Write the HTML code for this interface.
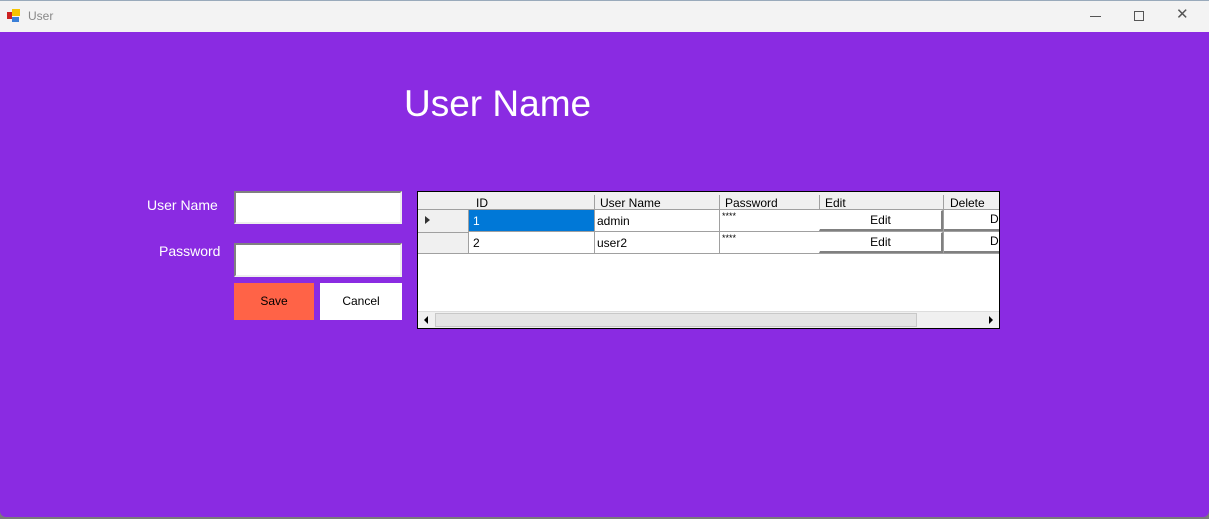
<!DOCTYPE html>
<html><head><style>
*{margin:0;padding:0;box-sizing:border-box}
body{width:1209px;height:519px;overflow:hidden;background:#7a7a7a;font-family:"Liberation Sans",sans-serif;position:relative}
.a{position:absolute}
.t{font-size:12px;color:#000}
</style></head><body>
<div class="a" style="left:0;top:0;width:1209px;height:32px;background:#f3f3f3;border-top:1px solid #9ab"></div>
<div class="a" style="left:7px;top:9px;width:14px;height:14px">
<div class="a" style="left:0;top:3px;width:5px;height:7px;background:#c22"></div>
<div class="a" style="left:5px;top:0;width:8px;height:7px;background:#f5c400"></div>
<div class="a" style="left:5px;top:8px;width:7px;height:5px;background:#3a7fd8"></div>
</div>
<div class="a" style="left:28px;top:9px;font-size:12px;color:#888">User</div>
<div class="a" style="left:1090px;top:16px;width:11px;height:1px;background:#555"></div>
<div class="a" style="left:1134px;top:11px;width:10px;height:10px;border:1px solid #555"></div>
<div class="a" style="left:1176px;top:5px;font-size:15px;color:#555">✕</div>
<div class="a" style="left:0;top:32px;width:1209px;height:485px;background:#8a2be2;border-radius:0 0 6px 6px"></div>
<div class="a" style="left:404px;top:83px;font-size:37px;color:#fff">User Name</div>
<div class="a" style="left:147px;top:197px;font-size:14px;color:#fff">User Name</div>
<div class="a" style="left:159px;top:243px;font-size:14px;color:#fff">Password</div>
<div class="a" style="left:234px;top:191px;width:168px;height:33px;background:#fff;border:2px solid #808080;border-right-color:#eee;border-bottom-color:#eee"></div>
<div class="a" style="left:234px;top:243px;width:168px;height:34px;background:#fff;border:2px solid #808080;border-right-color:#eee;border-bottom-color:#eee"></div>
<div class="a t" style="left:234px;top:283px;width:80px;height:37px;background:#ff6347;text-align:center;line-height:37px">Save</div>
<div class="a t" style="left:320px;top:283px;width:82px;height:37px;background:#fff;text-align:center;line-height:37px">Cancel</div>
<div class="a" style="left:417px;top:191px;width:583px;height:138px;background:#fff;border:1px solid #000;overflow:hidden">
 <div class="a" style="left:0;top:0;width:582px;height:18px;background:#f0f0f0;border-bottom:1px solid #a0a0a0"></div>
 <div class="a" style="left:0;top:18px;width:51px;height:44px;background:#f0f0f0;border-right:1px solid #a0a0a0"></div>
 <div class="a" style="left:0;top:40px;width:51px;height:1px;background:#a0a0a0"></div>
 <div class="a" style="left:7px;top:24px;width:0;height:0;border-left:5px solid #333;border-top:4px solid transparent;border-bottom:4px solid transparent"></div>
 <div class="a" style="left:51px;top:18px;width:125px;height:21px;background:#0078d7"></div>
 <div class="a" style="left:51px;top:39px;width:531px;height:1px;background:#a0a0a0"></div>
 <div class="a" style="left:0;top:61px;width:582px;height:1px;background:#a0a0a0"></div>
 <div class="a" style="left:176px;top:3px;width:1px;height:59px;background:#a0a0a0"></div>
 <div class="a" style="left:301px;top:3px;width:1px;height:59px;background:#a0a0a0"></div>
 <div class="a" style="left:401px;top:3px;width:1px;height:59px;background:#a0a0a0"></div>
 <div class="a" style="left:525px;top:3px;width:1px;height:59px;background:#a0a0a0"></div>
 <div class="a t" style="left:58px;top:4px">ID</div>
 <div class="a t" style="left:182px;top:4px">User Name</div>
 <div class="a t" style="left:307px;top:4px">Password</div>
 <div class="a t" style="left:407px;top:4px">Edit</div>
 <div class="a t" style="left:532px;top:4px">Delete</div>
 <div class="a t" style="left:55px;top:22px;color:#fff">1</div>
 <div class="a t" style="left:55px;top:44px">2</div>
 <div class="a t" style="left:179px;top:22px">admin</div>
 <div class="a t" style="left:179px;top:44px">user2</div>
 <div class="a" style="left:304px;top:19px;font-size:9px">****</div>
 <div class="a" style="left:304px;top:41px;font-size:9px">****</div>
 <div class="a t" style="left:401px;top:18px;width:124px;height:21px;border:1px solid #fff;border-right:2px solid #808080;border-bottom:2px solid #808080;text-align:center;line-height:19px">Edit</div>
 <div class="a t" style="left:401px;top:40px;width:124px;height:21px;border:1px solid #fff;border-right:2px solid #808080;border-bottom:2px solid #808080;text-align:center;line-height:19px">Edit</div>
 <div class="a t" style="left:526px;top:18px;width:90px;height:21px;border-bottom:2px solid #808080;line-height:19px;padding-left:46px;white-space:nowrap">Delete</div>
 <div class="a t" style="left:526px;top:40px;width:90px;height:21px;border-bottom:2px solid #808080;line-height:19px;padding-left:46px;white-space:nowrap">Delete</div>
 <div class="a" style="left:0;top:119px;width:582px;height:17px;background:#f0f0f0;border-top:1px solid #ddd"></div>
 <div class="a" style="left:17px;top:121px;width:482px;height:14px;background:#e4e4e4;border:1px solid #c8c8c8"></div>
 <div class="a" style="left:6px;top:124px;width:0;height:0;border-right:4px solid #000;border-top:4px solid transparent;border-bottom:4px solid transparent"></div>
 <div class="a" style="left:571px;top:124px;width:0;height:0;border-left:4px solid #000;border-top:4px solid transparent;border-bottom:4px solid transparent"></div>
</div>
</body></html>
